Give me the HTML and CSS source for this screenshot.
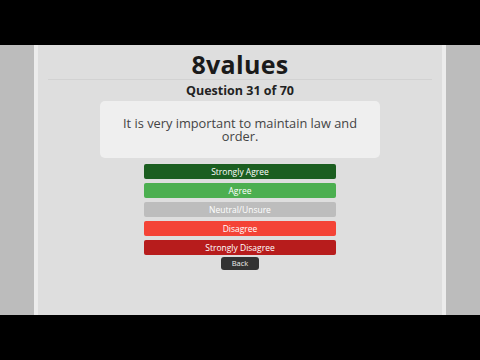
FILE: index.html
```html
<html>
<head>
<title>8values</title>
<meta name="viewport" content="width=device-width, initial-scale=1.0" />
<link rel="stylesheet" href="styles.css">
</head>
<body>

<div class="letterbox"></div>

<div id="stage">
<div id="panel">
<h1 class="title">8values</h1>
<hr class="rule">
<h2 class="counter">Question 31 of 70</h2>

<div class="questionBox">It is very important to maintain law and order.</div>

<div class="answers">
<div class="button sa">Strongly Agree</div>
<div class="button a">Agree</div>
<div class="button n">Neutral/Unsure</div>
<div class="button d">Disagree</div>
<div class="button sd">Strongly Disagree</div>
</div>

<div class="back">Back</div>
</div>
</div>

<div class="letterbox"></div>

</body>
</html>
```

FILE: styles.css
```css
body{
margin:0;
background-color:#000;
font-family:"Open Sans","Noto Sans",Arial,sans-serif;
overflow:hidden;
}
.letterbox{height:45px;background-color:#000;}

#stage{
height:270px;
background-color:#bcbcbc;
display:flex;
justify-content:center;
}
#panel{
width:404px;
background-color:#dedede;
border-left:4px solid #ececec;
border-right:4px solid #ececec;
display:flex;
flex-direction:column;
align-items:center;
}

.title{
margin:5px 0 0 0;
font-size:25px;
line-height:29px;
font-weight:700;
color:#1a1a1a;
letter-spacing:0.3px;
}
.rule{
align-self:stretch;
margin:0 10px;
border:none;
border-top:1px solid #d2d2d2;
height:0;
}
.counter{
margin:3px 0 0 0;
font-size:12.5px;
line-height:15px;
font-weight:700;
color:#222;
}

.questionBox{
margin-top:3px;
width:258px;
padding:14px 11px;
min-height:29px;
background-color:#efefef;
border-radius:5px;
color:#444;
font-size:12.8px;
line-height:13px;
text-align:center;
display:flex;
align-items:center;
justify-content:center;
}

.answers{
margin-top:6px;
width:192px;
display:flex;
flex-direction:column;
gap:4px;
}
.button{
height:15px;
border-radius:2px;
color:#fff;
font-size:8.5px;
line-height:15px;
text-align:center;
}
.sa{background-color:#1b5e20;}
.a{background-color:#4caf50;}
.n{background-color:#bdbdbd;}
.d{background-color:#f44336;}
.sd{background-color:#b71c1c;}

.back{
margin-top:2px;
width:38px;
height:13px;
border-radius:3px;
background-color:#333;
color:#eee;
font-size:7.5px;
line-height:13px;
text-align:center;
}
```
